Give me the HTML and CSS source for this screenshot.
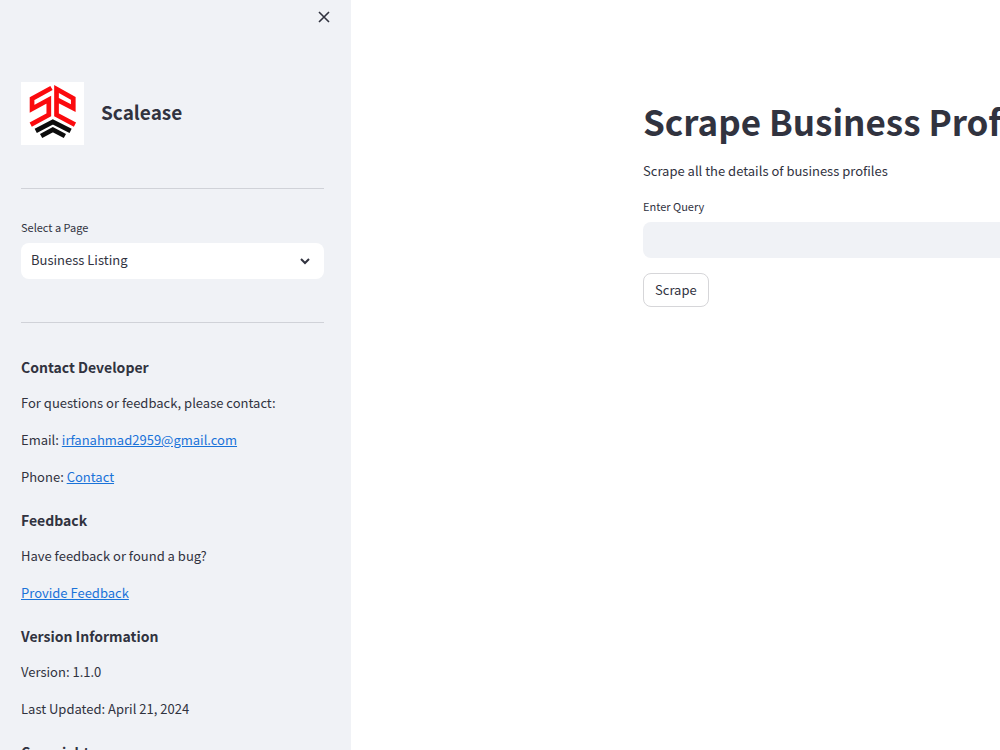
FILE: index.html
```html
<!DOCTYPE html>
<html lang="en">
  <head>
    <meta charset="utf-8">
    <meta name="viewport" content="width=device-width, initial-scale=1">
    <title>Scalease</title>
    <link rel="stylesheet" href="styles.css">
  </head>
  <body>
    <aside class="sidebar">
      <div class="sidebar-top">
        <button class="close" type="button" aria-label="Close sidebar">
          <svg viewBox="0 0 12 12" width="12" height="12">
            <path d="M1 1 L11 11 M11 1 L1 11" />
          </svg>
        </button>
      </div>

      <div class="brand">
        <svg class="logo" viewBox="0 0 188 188" role="img" aria-label="Scalease logo">
          <g fill="none" stroke="#fb0a0e" stroke-width="14">
            <path d="M91 18 L33 50 V80 L83 53 V98 L29 127" />
            <path d="M161 127 L106 98 V21 L156 49 V78 L110 54" />
          </g>
          <g fill="none" stroke="#0c0c0c" stroke-width="14">
            <path d="M44 146 L95 119 L148 146" />
            <path d="M60 161 L95 142 L131 161" />
          </g>
        </svg>
        <h2 class="brand-name">Scalease</h2>
      </div>

      <hr>

      <div class="field">
        <label for="page">Select a Page</label>
        <div class="select">
          <select id="page">
            <option>Business Listing</option>
          </select>
          <svg class="chevron" viewBox="0 0 12 8" width="12" height="8">
            <path d="M2 2 L6 6 L10 2" />
          </svg>
        </div>
      </div>

      <hr>

      <section class="info">
        <h3>Contact Developer</h3>
        <p>For questions or feedback, please contact:</p>
        <p>Email: <a href="mailto:irfanahmad2959@gmail.com">irfanahmad2959@gmail.com</a></p>
        <p>Phone: <a href="#contact">Contact</a></p>
        <h3>Feedback</h3>
        <p>Have feedback or found a bug?</p>
        <p><a href="#feedback">Provide Feedback</a></p>
        <h3>Version Information</h3>
        <p>Version: 1.1.0</p>
        <p>Last Updated: April 21, 2024</p>
        <h3>Copyright</h3>
      </section>
    </aside>

    <main class="main">
      <div class="content">
        <h1>Scrape Business Profiles</h1>
        <p>Scrape all the details of business profiles</p>
        <div class="field">
          <label for="query">Enter Query</label>
          <input id="query" type="text">
        </div>
        <button class="btn" type="button">Scrape</button>
      </div>
    </main>
  </body>
</html>
```
FILE: styles.css
```css
* {
  box-sizing: border-box;
}

body {
  margin: 0;
  display: flex;
  height: 100vh;
  overflow: hidden;
  background: #fff;
  color: #31333f;
  font-family: "Source Sans Pro", "Noto Sans CJK SC", sans-serif;
  font-size: 13px;
  line-height: 22px;
}

h1, h2, h3, p {
  margin: 0;
}

a {
  color: #1a73d9;
}

button, input, select {
  font: inherit;
  color: inherit;
}

/* sidebar */
.sidebar {
  flex: none;
  width: 351px;
  padding: 0 27px 0 21px;
  background: #f0f2f6;
  overflow: hidden;
}

.sidebar-top {
  display: flex;
  justify-content: flex-end;
  height: 82px;
  padding-top: 6px;
}

.close {
  display: flex;
  align-items: center;
  justify-content: center;
  width: 22px;
  height: 22px;
  margin-right: -11px;
  padding: 0;
  border: 0;
  background: none;
}

.close path,
.chevron path {
  fill: none;
  stroke: #31333f;
  stroke-width: 2;
}

.close path {
  stroke-width: 1.6;
}

.brand {
  display: flex;
  align-items: center;
  gap: 17px;
}

.logo {
  width: 63px;
  height: 63px;
  background: #fff;
}

.brand-name {
  padding-bottom: 4px;
  font-size: 19px;
  font-weight: 600;
  line-height: 28px;
}

hr {
  margin: 43px 0 27px;
  border: 0;
  border-top: 1px solid #d0d2d8;
}

.field label {
  display: block;
  margin-bottom: 5px;
  font-size: 11px;
}

.select {
  position: relative;
}

.select select {
  display: block;
  width: 100%;
  height: 36px;
  padding: 0 36px 2px 10px;
  border: 0;
  border-radius: 8px;
  background: #fff;
  appearance: none;
}

.chevron {
  position: absolute;
  top: 14px;
  right: 13px;
  pointer-events: none;
}

.info {
  padding-top: 6px;
}

.info h3 {
  margin-bottom: 14px;
  font-size: 14px;
  font-weight: 600;
}

.info p {
  margin-bottom: 15px;
}

.info p + h3 {
  margin-top: 21px;
}

/* main */
.main {
  flex: 1;
  min-width: 0;
  padding: 96px 0 0 292px;
  overflow: hidden;
}

.content {
  width: 690px;
}

h1 {
  margin-bottom: 14px;
  font-size: 35px;
  font-weight: 700;
  line-height: 50px;
  white-space: nowrap;
}

.content .field {
  margin: 13px 0 15px;
}

.content input {
  display: block;
  width: 100%;
  height: 36px;
  padding: 0 10px;
  border: 0;
  border-radius: 8px;
  background: #f0f2f6;
}

.btn {
  height: 34px;
  padding: 0 11px;
  border: 1px solid #d6d6d9;
  border-radius: 8px;
  background: #fff;
}
```
